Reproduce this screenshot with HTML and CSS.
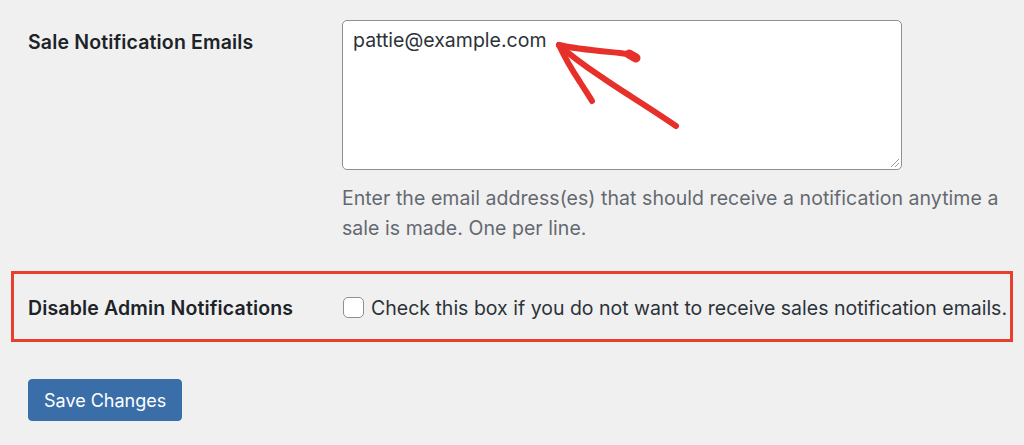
FILE: index.html
```html
<!DOCTYPE html>
<html>
<head>
<meta charset="utf-8">
<link rel="stylesheet" href="styles.css">
</head>
<body>
<div class="page">
  <div class="row row-emails">
    <div class="label">Sale Notification Emails</div>
    <div class="field">
      <div class="textarea">pattie@example.com</div>
      <p class="desc">Enter the email address(es) that should receive a notification anytime a sale is made. One per line.</p>
    </div>
  </div>
  <div class="highlight">
    <div class="label">Disable Admin Notifications</div>
    <label class="check">
      <span class="box"></span>
      <span>Check this box if you do not want to receive sales notification emails.</span>
    </label>
  </div>
  <div class="actions">
    <button class="btn">Save Changes</button>
  </div>
  <svg class="arrow" width="1024" height="445" viewBox="0 0 1024 445">
    <path d="M676 126 C 650 108, 620 90, 600 76 C 585 66, 570 55, 559 45" fill="none" stroke="#e8302a" stroke-width="6" stroke-linecap="round"/>
    <path d="M559 45 C 575 49, 600 51, 620 53 C 628 54, 633 55, 635 58" fill="none" stroke="#e8302a" stroke-width="6" stroke-linecap="round"/>
    <path d="M629 54 L 636 58" fill="none" stroke="#e8302a" stroke-width="9" stroke-linecap="round"/>
    <path d="M559 45 C 565 58, 572 70, 580 82 C 585 90, 589 96, 592 101" fill="none" stroke="#e8302a" stroke-width="6" stroke-linecap="round"/>
  </svg>
</div>
</body>
</html>
```

FILE: styles.css
```css
html, body {
  margin: 0;
  padding: 0;
  background: #f0f0f1;
}
body {
  font-family: Inter, "Liberation Sans", Arial, sans-serif;
  font-size: 19.5px;
  color: #1d2327;
}
.page {
  position: relative;
  width: 1024px;
  height: 445px;
  overflow: hidden;
  padding-top: 20px;
  box-sizing: border-box;
}
.row-emails {
  display: grid;
  grid-template-columns: 314px 1fr;
  padding-left: 28px;
}
.label {
  font-weight: 600;
  line-height: 24px;
  letter-spacing: 0.15px;
  color: #1d2327;
}
.row-emails .label {
  padding-top: 10px;
}
.textarea {
  width: 560px;
  height: 150px;
  box-sizing: border-box;
  background: #fff;
  border: 1px solid #8c8f94;
  border-radius: 5px;
  padding: 7px 10px;
  line-height: 24px;
  color: #2c3338;
  position: relative;
}
.textarea::after {
  content: "";
  position: absolute;
  right: 2px;
  bottom: 2px;
  width: 8px;
  height: 8px;
  background: linear-gradient(135deg, transparent 45%, #9a9a9a 45%, #9a9a9a 55%, transparent 55%, transparent 70%, #9a9a9a 70%, #9a9a9a 80%, transparent 80%);
}
.desc {
  margin: 13px 0 0 0;
  width: 672px;
  line-height: 30px;
  letter-spacing: 0.05px;
  color: #646970;
}
.highlight {
  margin: 28px 0 0 11px;
  width: 1002px;
  height: 71px;
  box-sizing: border-box;
  border: 3px solid #e8402c;
  display: flex;
  align-items: center;
  padding-left: 14px;
}
.highlight .label {
  width: 315px;
  flex: none;
  padding-top: 3px;
}
.check {
  display: flex;
  align-items: center;
  gap: 7px;
  color: #2c3338;
  white-space: nowrap;
  padding-top: 3px;
}
.box {
  width: 21px;
  height: 21px;
  box-sizing: border-box;
  border: 1px solid #8c8f94;
  border-radius: 5px;
  background: #fff;
  margin-top: -2px;
}
.actions {
  margin: 37px 0 0 28px;
}
.btn {
  font-family: inherit;
  font-size: 18px;
  height: 42px;
  padding: 0 15px;
  background: #3a6ea9;
  color: #fff;
  border: 1px solid #3a6ea9;
  border-radius: 4px;
}
.arrow {
  position: absolute;
  left: 0;
  top: 0;
  pointer-events: none;
}
```
